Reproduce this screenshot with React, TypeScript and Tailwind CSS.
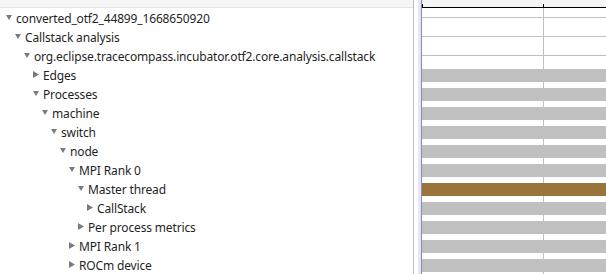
import React from 'react';

type Row = { label: string; level: number; open?: boolean; bar?: 'none' | 'gray' | 'brown' };

const rows: Row[] = [
    { label: 'converted_otf2_44899_1668650920', level: 0, open: true, bar: 'none' },
    { label: 'Callstack analysis', level: 1, open: true, bar: 'none' },
    { label: 'org.eclipse.tracecompass.incubator.otf2.core.analysis.callstack', level: 2, open: true, bar: 'none' },
    { label: 'Edges', level: 3, open: false, bar: 'gray' },
    { label: 'Processes', level: 3, open: true, bar: 'gray' },
    { label: 'machine', level: 4, open: true, bar: 'gray' },
    { label: 'switch', level: 5, open: true, bar: 'gray' },
    { label: 'node', level: 6, open: true, bar: 'gray' },
    { label: 'MPI Rank 0', level: 7, open: true, bar: 'gray' },
    { label: 'Master thread', level: 8, open: true, bar: 'brown' },
    { label: 'CallStack', level: 9, open: false, bar: 'gray' },
    { label: 'Per process metrics', level: 8, open: false, bar: 'gray' },
    { label: 'MPI Rank 1', level: 7, open: false, bar: 'gray' },
    { label: 'ROCm device', level: 7, open: false, bar: 'gray' },
];

function Toggle({ open }: { open?: boolean }) {
    return open ? (
        <svg width="6" height="5" viewBox="0 0 6 5" className="shrink-0">
            <path d="M0 0 H6 L3 5 Z" fill="#7b7b7b" />
        </svg>
    ) : (
        <svg width="6" height="7" viewBox="0 0 6 7" className="shrink-0">
            <path d="M0 0 L6 3.5 L0 7 Z" fill="#7b7b7b" />
        </svg>
    );
}

export default function App() {
    return (
        <div className="flex w-[606px] h-[274px] overflow-hidden bg-white font-['Noto_Sans',sans-serif] text-[12px] tracking-[-0.15px] text-[#1f1f1f]">
            {/* Tree */}
            <div className="flex flex-col w-[413px] shrink-0">
                <div className="h-[8px] shrink-0 bg-[#f5f5f5] border-b border-[#e4e4e4]" />
                {rows.map((row, i) => (
                    <div
                        key={i}
                        className="h-[19px] shrink-0 flex items-center whitespace-nowrap"
                        style={{ paddingLeft: 6 + row.level * 9 }}
                    >
                        <div className="w-[10px] flex items-center">
                            <Toggle open={row.open} />
                        </div>
                        <span className="relative top-px leading-none">{row.label}</span>
                    </div>
                ))}
            </div>

            {/* Sash */}
            <div className="w-px shrink-0 bg-[#bcbcbc]" />
            <div className="w-[4px] shrink-0 bg-white" />
            <div className="w-[3px] shrink-0 bg-[#e9e9e9]" />
            <div className="w-px shrink-0 bg-[#8484f0]" />

            {/* Time graph */}
            <div className="flex-1 flex flex-col">
                <div className="relative h-[8px] shrink-0 bg-[#f5f5f5] border-b border-black">
                    <div className="absolute left-0 bottom-0 w-px h-[3px] bg-black" />
                    <div className="absolute left-[121px] bottom-0 w-px h-[3px] bg-black" />
                </div>
                <div className="relative flex-1">
                    <div className="absolute top-0 bottom-0 left-[121px] w-px bg-[#c0c0c0]" />
                    {rows.map((row, i) => (
                        <div key={i} className="relative h-[19px]">
                            {row.bar === 'none' ? (
                                <div className="absolute left-0 right-0 top-[9px] h-px bg-[#c0c0c0]" />
                            ) : (
                                <div
                                    className={`absolute left-0 right-0 top-[4px] h-[13px] ${
                                        row.bar === 'brown' ? 'bg-[#99743b]' : 'bg-[#c0c0c0]'
                                    }`}
                                />
                            )}
                        </div>
                    ))}
                </div>
            </div>
        </div>
    );
}
